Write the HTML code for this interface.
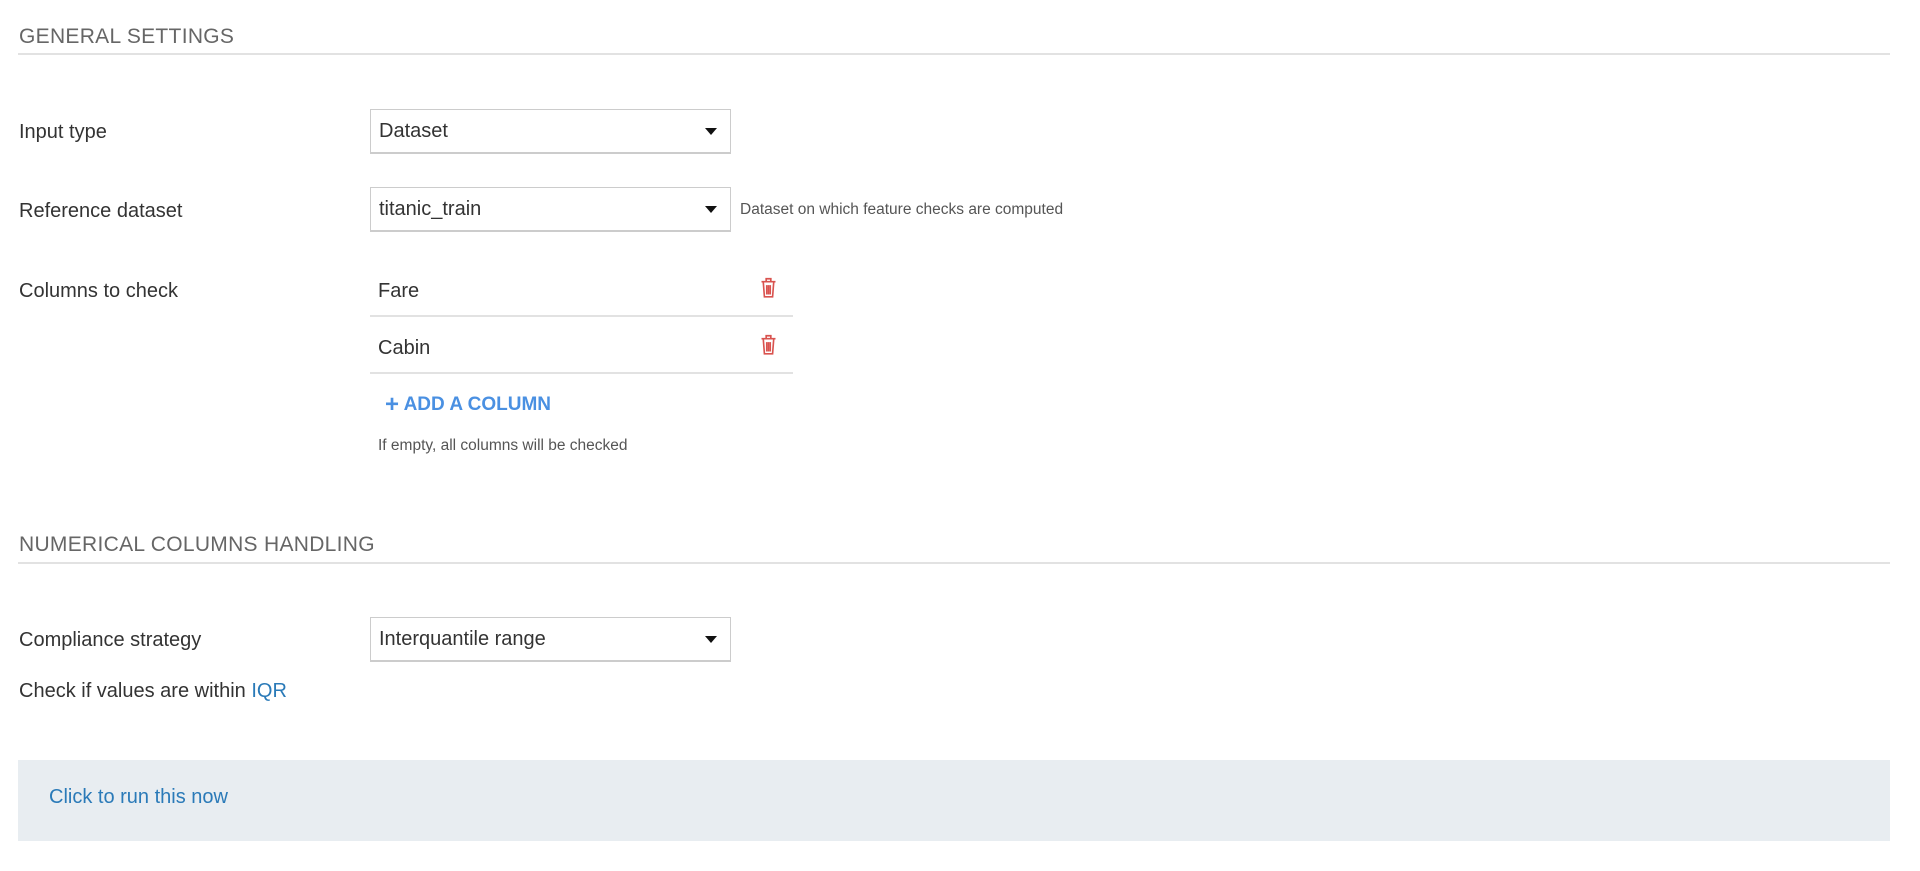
<!DOCTYPE html>
<html><head><meta charset="utf-8"><style>
*{box-sizing:border-box;margin:0;padding:0}
body{width:1920px;height:871px;background:#fff;font-family:"Liberation Sans",sans-serif;color:#333;position:relative;overflow:hidden}
.a{position:absolute;white-space:nowrap}
.h{font-size:21px;color:#666;letter-spacing:0.3px}
.line{position:absolute;left:18px;width:1872px;height:2px;background:#e2e2e2}
.lbl{font-size:20px;color:#333}
.sel{position:absolute;left:370px;width:361px;height:45px;border:1px solid #ccc;border-bottom:2px solid #ccc;background:#fff;font-size:20px;color:#333;padding:10px 8px}
.sel:after{content:"";position:absolute;right:13px;top:18px;border-left:6px solid transparent;border-right:6px solid transparent;border-top:7px solid #111}
.row{position:absolute;left:370px;width:423px;height:2px;background:#e2e2e2}
.tr{position:absolute;left:760px}
</style></head><body>
<div class="a h" style="left:19px;top:25px">GENERAL SETTINGS</div>
<div class="line" style="top:53px"></div>

<div class="a lbl" style="left:19px;top:121px">Input type</div>
<div class="sel" style="top:109px">Dataset</div>

<div class="a lbl" style="left:19px;top:200px">Reference dataset</div>
<div class="sel" style="top:187px">titanic_train</div>
<div class="a" style="left:740px;top:201px;font-size:15.5px;color:#555">Dataset on which feature checks are computed</div>

<div class="a lbl" style="left:19px;top:280px">Columns to check</div>
<div class="a lbl" style="left:378px;top:280px">Fare</div>
<svg class="tr" style="top:277px" width="17" height="21" viewBox="0 0 14 18"><g fill="none" stroke="#d9534f" stroke-width="1.4"><path d="M1 4h12M5 4V1.5h4V4M2.5 4l1 13h7l1-13M5.5 7v8M7 7v8M8.5 7v8"/></g></svg>
<div class="row" style="top:315px"></div>
<div class="a lbl" style="left:378px;top:337px">Cabin</div>
<svg class="tr" style="top:334px" width="17" height="21" viewBox="0 0 14 18"><g fill="none" stroke="#d9534f" stroke-width="1.4"><path d="M1 4h12M5 4V1.5h4V4M2.5 4l1 13h7l1-13M5.5 7v8M7 7v8M8.5 7v8"/></g></svg>
<div class="row" style="top:372px"></div>

<div class="a" style="left:385px;top:394px;font-size:19px;font-weight:bold;color:#4a90e2"><span style="font-size:24px;line-height:19px;vertical-align:-2px">+</span> ADD A COLUMN</div>
<div class="a" style="left:378px;top:437px;font-size:15.5px;color:#555">If empty, all columns will be checked</div>

<div class="a h" style="left:19px;top:533px">NUMERICAL COLUMNS HANDLING</div>
<div class="line" style="top:562px"></div>

<div class="a lbl" style="left:19px;top:629px">Compliance strategy</div>
<div class="sel" style="top:617px">Interquantile range</div>
<div class="a lbl" style="left:19px;top:680px">Check if values are within <span style="color:#2a7ab8">IQR</span></div>

<div class="a" style="left:18px;top:760px;width:1872px;height:81px;background:#e8edf1"></div>
<div class="a" style="left:49px;top:786px;font-size:20px;color:#2a7ab8">Click to run this now</div>
</body></html>
